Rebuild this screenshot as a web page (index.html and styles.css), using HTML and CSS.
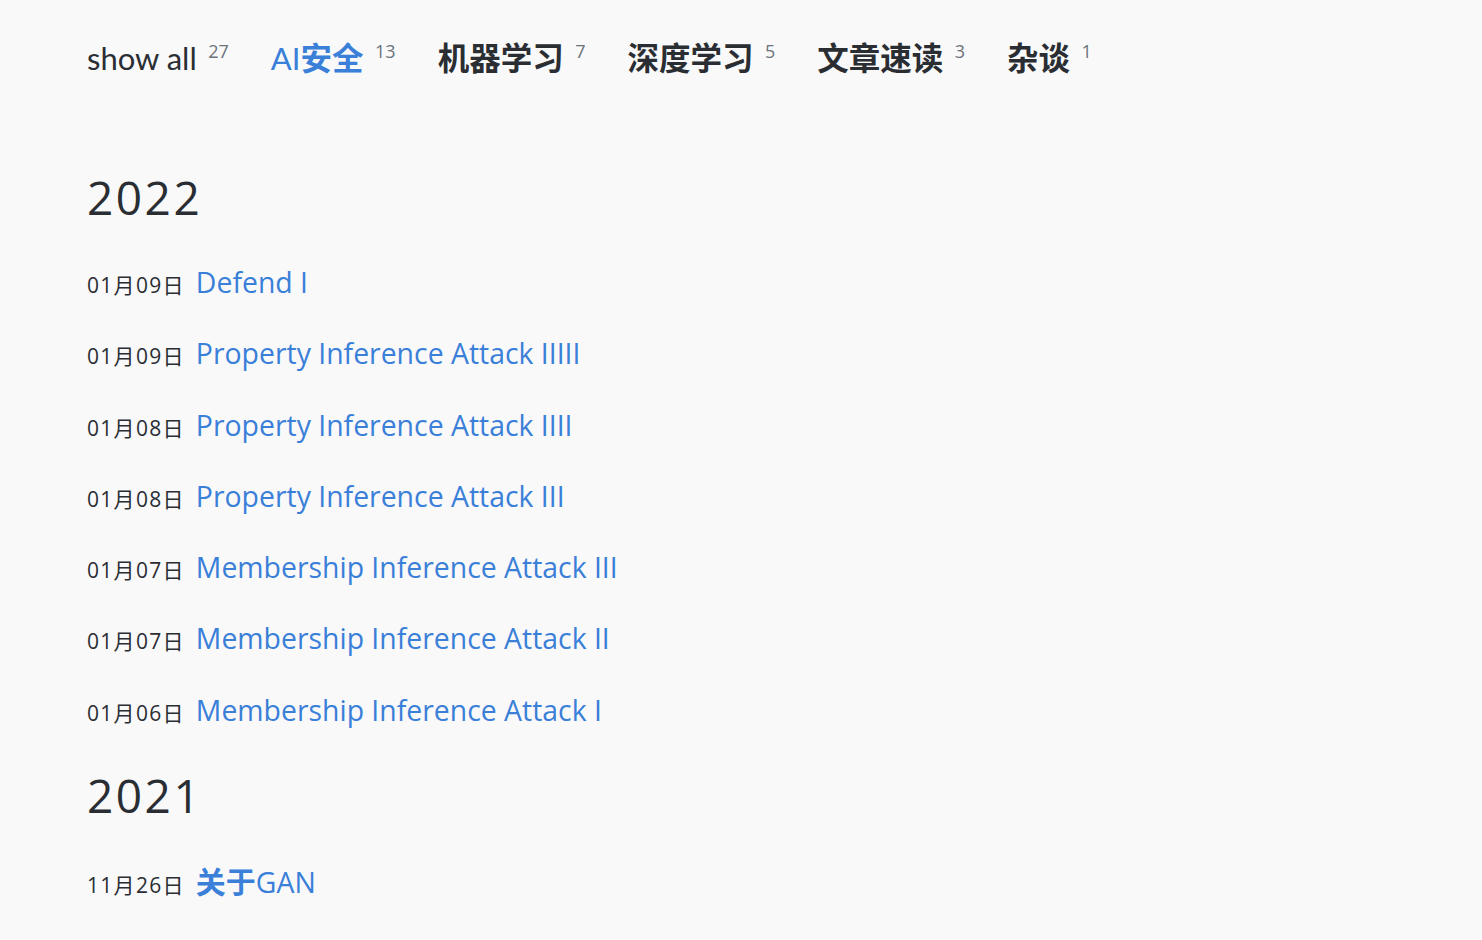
FILE: index.html
```html
<!DOCTYPE html>
<html lang="zh">
<head>
<meta charset="utf-8">
<title>Archive</title>
<link rel="stylesheet" href="styles.css">
</head>
<body>
<div class="page">
  <nav class="tags">
    <a class="tag">show all<sup>27</sup></a>
    <a class="tag active">AI<span class="cn">安全</span><sup>13</sup></a>
    <a class="tag"><span class="cn">机器学习</span><sup>7</sup></a>
    <a class="tag"><span class="cn">深度学习</span><sup>5</sup></a>
    <a class="tag"><span class="cn">文章速读</span><sup>3</sup></a>
    <a class="tag"><span class="cn">杂谈</span><sup>1</sup></a>
  </nav>
  <section class="year">
    <h2>2022</h2>
    <ul class="posts">
      <li><span class="date">01月09日</span><a>Defend I</a></li>
      <li><span class="date">01月09日</span><a>Property Inference Attack IIIII</a></li>
      <li><span class="date">01月08日</span><a>Property Inference Attack IIII</a></li>
      <li><span class="date">01月08日</span><a>Property Inference Attack III</a></li>
      <li><span class="date">01月07日</span><a>Membership Inference Attack III</a></li>
      <li><span class="date">01月07日</span><a>Membership Inference Attack II</a></li>
      <li><span class="date">01月06日</span><a>Membership Inference Attack I</a></li>
    </ul>
  </section>
  <section class="year">
    <h2>2021</h2>
    <ul class="posts">
      <li><span class="date">11月26日</span><a><span class="cn">关于</span>GAN</a></li>
    </ul>
  </section>
</div>
</body>
</html>
```
FILE: styles.css
```css
html, body {
  margin: 0;
  padding: 0;
  background: #f9f9fa;
}
body {
  font-family: "Open Sans", "Noto Sans CJK SC", sans-serif;
  color: #2a2e33;
}
.page {
  padding: 28px 87px 0;
}
.tags {
  display: flex;
  align-items: baseline;
  gap: 42px;
  height: 56px;
}
.tag {
  font-family: "Lato", "Noto Sans CJK SC", sans-serif;
  font-size: 31px;
  font-weight: 400;
  color: #2a2e33;
  line-height: 56px;
}
.tag .cn {
  font-family: "Noto Sans CJK SC", sans-serif;
  font-weight: 700;
  font-size: 31.5px;
}
.tag.active {
  color: #3a7fd8;
}
.tag sup {
  font-family: "Open Sans", sans-serif;
  font-size: 18px;
  font-weight: 400;
  color: #6d737a;
  margin-left: 11.5px;
  vertical-align: 12px;
  line-height: 0;
}
.year h2 {
  font-size: 46px;
  font-weight: 400;
  letter-spacing: 2.5px;
  margin: 0;
  height: 99px;
  line-height: 99px;
}
.tags + .year h2 {
  margin-top: 64px;
}
.posts {
  list-style: none;
  margin: 0;
  padding: 0;
}
.posts li {
  display: flex;
  align-items: baseline;
  gap: 11px;
  height: 71.3px;
  line-height: 71.3px;
}
.date {
  font-size: 21px;
  letter-spacing: 1.3px;
}
.posts a {
  font-size: 28.4px;
  color: #3a7fd8;
}
.posts a .cn {
  font-family: "Noto Sans CJK SC", sans-serif;
  font-weight: 700;
  font-size: 30px;
}
```
